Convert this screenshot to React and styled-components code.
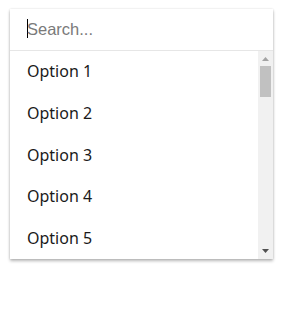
import { useEffect, useRef } from "react";
import styled, { createGlobalStyle } from "styled-components";

const GlobalStyle = createGlobalStyle`
  body {
    margin: 0;
    background: #fff;
  }
`;

const Page = styled.div`
  padding: 9px 15px 12px 10px;
`;

const Dropdown = styled.div`
  width: 263px;
  background: #fff;
  box-shadow: 0 2px 3px rgba(0, 0, 0, 0.28), 0 0 2px rgba(0, 0, 0, 0.12);
`;

// the static caret line mirrors the focused look of the screenshot
const SearchInput = styled.input`
  display: block;
  box-sizing: border-box;
  width: 100%;
  height: 42px;
  margin: 0;
  padding: 0 16px 0 17px;
  border: none;
  border-bottom: 1px solid #e6e6e6;
  outline: none;
  font-family: "Liberation Sans", Arial, sans-serif;
  font-size: 16.5px;
  color: #222;
  caret-color: transparent;
  background: linear-gradient(#000, #000) no-repeat 17px 10px / 1px 19px, #fff;

  &::placeholder {
    color: #7a7a7a;
  }
`;

const ListArea = styled.div`
  display: flex;
  height: 208px;
`;

const OptionList = styled.ul`
  flex: 1;
  list-style: none;
  margin: 0;
  padding: 0;
  overflow-y: auto;
  scrollbar-width: none;
`;

const OptionItem = styled.li`
  padding: 10px 17px;
  font-family: "Noto Sans", sans-serif;
  font-size: 16px;
  line-height: 21.75px;
  color: #1a1a1a;
  cursor: pointer;

  &:hover {
    background: #f5f5f5;
  }
`;

const ScrollBar = styled.div`
  width: 15px;
  display: flex;
  flex-direction: column;
  background: #f1f1f1;
`;

const ScrollButton = styled.div`
  height: 15px;
  display: flex;
  justify-content: center;
  align-items: ${props => (props.down ? "flex-start" : "flex-end")};
  padding: ${props => (props.down ? "5px 0 0" : "0 0 5px")};
  box-sizing: border-box;
  flex-shrink: 0;
`;

const ScrollTrack = styled.div`
  flex: 1;
  padding: 0 2px;
`;

const ScrollThumb = styled.div`
  height: 31px;
  background: #c1c1c1;
`;

const Arrow = ({ down, color }) => (
  <svg width="7" height="4" viewBox="0 0 7 4">
    <path d={down ? "M0 0 H7 L3.5 4 Z" : "M0 4 H7 L3.5 0 Z"} fill={color} />
  </svg>
);

const options = Array.from({ length: 29 }, (_, i) => `Option ${i + 1}`);

const App = () => {
  const inputRef = useRef(null);

  useEffect(() => {
    inputRef.current && inputRef.current.focus();
  }, []);

  return (
    <>
      <GlobalStyle />
      <Page>
        <Dropdown>
          <SearchInput ref={inputRef} type="text" placeholder="Search..." />
          <ListArea>
            <OptionList>
              {options.map(opt => (
                <OptionItem key={opt}>{opt}</OptionItem>
              ))}
            </OptionList>
            <ScrollBar>
              <ScrollButton>
                <Arrow color="#a3a3a3" />
              </ScrollButton>
              <ScrollTrack>
                <ScrollThumb />
              </ScrollTrack>
              <ScrollButton down>
                <Arrow down color="#505050" />
              </ScrollButton>
            </ScrollBar>
          </ListArea>
        </Dropdown>
      </Page>
    </>
  );
};

export default App;
